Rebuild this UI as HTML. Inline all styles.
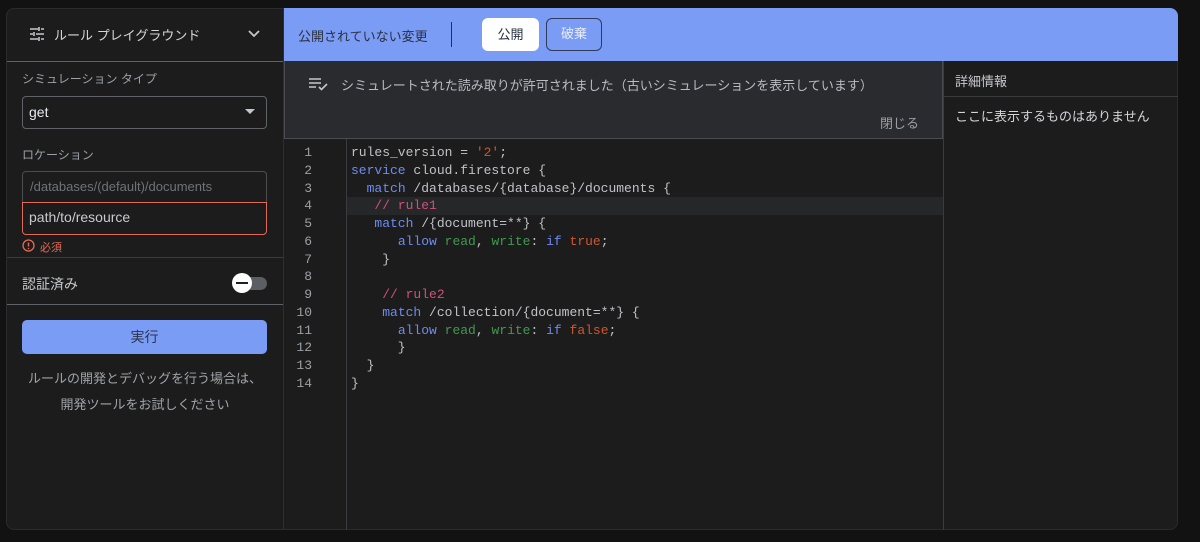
<!DOCTYPE html>
<html><head><meta charset="utf-8"><style>
*{box-sizing:border-box;margin:0;padding:0}
body{width:1200px;height:542px;background:#121212;font-family:"Liberation Sans","Noto Sans CJK JP",sans-serif;color:#c4c7cc;position:relative;overflow:hidden;font-size:13px}
.a{position:absolute}
.frame{left:6px;top:8px;width:1172px;height:522px;background:#1c1c1c;border:1px solid #2a2b2e;border-radius:8px;overflow:hidden}
.code{font-family:"Liberation Mono",monospace;font-size:13px;line-height:17.75px;white-space:pre;color:#bfc2c7}
.k{color:#6d8cf0}.g{color:#3f9a4e}.r{color:#d0562e}.c{color:#d0507a}
</style></head><body>
<div class="a frame"></div>
<div class="a" style="left:7px;top:61px;width:276px;height:1px;background:#5f6368"></div>
<svg class="a" style="left:29px;top:27px" width="16" height="14" viewBox="0 0 16 14"><g stroke="#c4c7cc" stroke-width="1.6" fill="none"><path d="M1 2h8M12 2h3M1 7h3M7 7h8M1 12h8M12 12h3M10 0v4M5 5v4M10 10v4"/></g></svg>
<div class="a" style="left:54px;top:25px;font-size:13px;color:#d4d6da">ルール プレイグラウンド</div>
<svg class="a" style="left:247px;top:29px" width="14" height="9"><path d="M2 2l5 5 5-5" stroke="#c4c7cc" stroke-width="1.8" fill="none"/></svg>
<div class="a" style="left:22px;top:70px;font-size:12px;color:#9aa0a6">シミュレーション タイプ</div>
<div class="a" style="left:22px;top:96px;width:245px;height:33px;border:1px solid #5f6368;border-radius:4px"></div>
<div class="a" style="left:29px;top:104px;font-size:14px;color:#e8eaed">get</div>
<svg class="a" style="left:245px;top:109px" width="10" height="6"><path d="M0 0h10L5 5z" fill="#c4c7cc"/></svg>
<div class="a" style="left:22px;top:146px;font-size:12px;color:#9aa0a6">ロケーション</div>
<div class="a" style="left:22px;top:171px;width:245px;height:33px;border:1px solid #4a4c50;border-bottom:none;border-radius:4px 4px 0 0"></div>
<div class="a" style="left:30px;top:179px;color:#6f7378">/databases/(default)/documents</div>
<div class="a" style="left:22px;top:202px;width:245px;height:33px;border:1px solid #e06a55;border-radius:0 0 4px 4px"></div>
<div class="a" style="left:29px;top:209px;font-size:14px;color:#c8cacf">path/to/resource</div>
<svg class="a" style="left:22px;top:239px" width="13" height="13"><circle cx="6.5" cy="6.5" r="5.5" stroke="#e06a55" stroke-width="1.3" fill="none"/><path d="M6.5 3.5v4" stroke="#e06a55" stroke-width="1.4"/><circle cx="6.5" cy="9.5" r=".8" fill="#e06a55"/></svg>
<div class="a" style="left:40px;top:239px;font-size:11px;color:#e06a55">必須</div>
<div class="a" style="left:7px;top:257px;width:276px;height:1px;background:#3a3b3f"></div>
<div class="a" style="left:22px;top:274px;font-size:14px;color:#c4c7cc">認証済み</div>
<div class="a" style="left:240px;top:277px;width:27px;height:13px;border-radius:7px;background:#5b5e63"></div>
<div class="a" style="left:232px;top:273px;width:20px;height:20px;border-radius:50%;background:#fff"></div>
<div class="a" style="left:236px;top:282px;width:12px;height:2px;background:#202124"></div>
<div class="a" style="left:7px;top:304px;width:276px;height:1px;background:#5f6368"></div>
<div class="a" style="left:22px;top:320px;width:245px;height:34px;border-radius:5px;background:#7b9cf4;color:#2a3550;font-size:14px;text-align:center;line-height:34px">実行</div>
<div class="a" style="left:7px;top:366px;width:276px;text-align:center;color:#a0a4a9;line-height:26px">ルールの開発とデバッグを行う場合は、<br>開発ツールをお試しください</div>
<div class="a" style="left:283px;top:8px;width:1px;height:522px;background:#2e2f33"></div>
<div class="a" style="left:284px;top:8px;width:894px;height:53px;background:#7b9cf4;border-radius:0 8px 0 0"></div>
<div class="a" style="left:298px;top:26px;color:#2a3042">公開されていない変更</div>
<div class="a" style="left:451px;top:22px;width:1px;height:25px;background:#2a3042"></div>
<div class="a" style="left:482px;top:18px;width:57px;height:33px;background:#fff;border-radius:6px;text-align:center;line-height:33px;color:#2a3042">公開</div>
<div class="a" style="left:546px;top:18px;width:56px;height:33px;border:1.5px solid #2f3a5c;border-radius:6px;text-align:center;line-height:30px;color:#e8ecf8">破棄</div>
<div class="a" style="left:284px;top:61px;width:659px;height:78px;background:#2a2b2f;border:1px solid #4a4c52;border-top:none"></div>
<svg class="a" style="left:309px;top:77px" width="20" height="14"><g stroke="#c4c7cc" stroke-width="1.6"><path d="M0 2h12M0 6h12M0 10h7"/><path d="M10 10l2.5 2.5L18 7" fill="none"/></g></svg>
<div class="a" style="left:341px;top:75px;color:#b8bbc0">シミュレートされた読み取りが許可されました（古いシミュレーションを表示しています）</div>
<div class="a" style="left:880px;top:113px;color:#9aa0a6">閉じる</div>
<div class="a" style="left:943px;top:61px;width:1px;height:469px;background:#3a3b3f"></div>
<div class="a" style="left:955px;top:71px;color:#c4c7cc">詳細情報</div>
<div class="a" style="left:944px;top:96px;width:234px;height:1px;background:#3a3b3f"></div>
<div class="a" style="left:955px;top:106px;color:#d4d6da">ここに表示するものはありません</div>
<div class="a" style="left:346px;top:139px;width:1px;height:391px;background:#3a3b3f"></div>
<div class="a" style="left:347px;top:197px;width:596px;height:18px;background:#262729"></div>
<div class="a code" style="left:284px;top:144px;width:28px;text-align:right;color:#9aa0a6">1
2
3
4
5
6
7
8
9
10
11
12
13
14</div>
<div class="a code" style="left:351px;top:144px">rules_version = <span class="r">'2'</span>;
<span class="k">service</span> cloud.firestore {
  <span class="k">match</span> /databases/{database}/documents {
   <span class="c">// rule1</span>
   <span class="k">match</span> /{document=**} {
      <span class="k">allow</span> <span class="g">read</span>, <span class="g">write</span>: <span class="k">if</span> <span class="r">true</span>;
    }

    <span class="c">// rule2</span>
    <span class="k">match</span> /collection/{document=**} {
      <span class="k">allow</span> <span class="g">read</span>, <span class="g">write</span>: <span class="k">if</span> <span class="r">false</span>;
      }
  }
}</div>
</body></html>
